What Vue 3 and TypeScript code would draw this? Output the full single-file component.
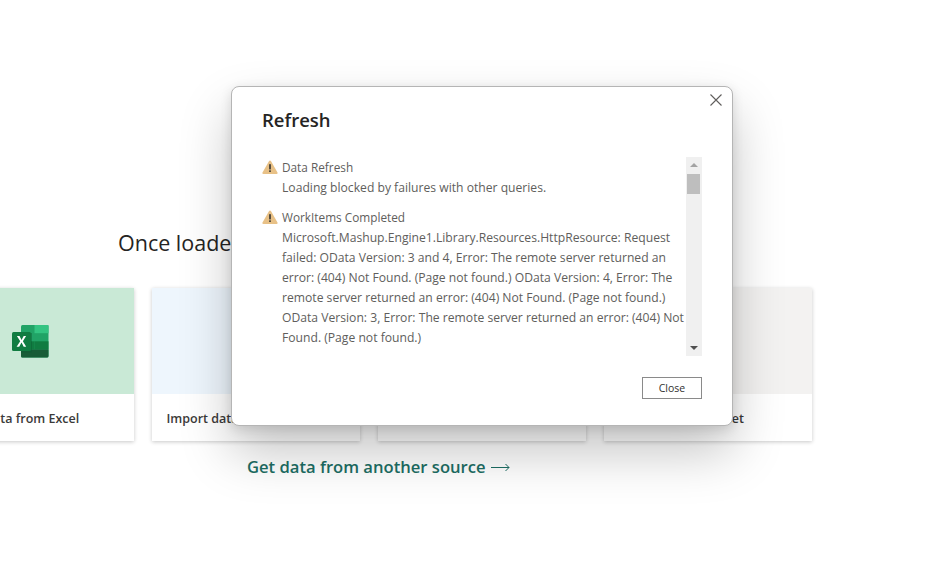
<script setup lang="ts">
interface Card { label: string; tone: string; excel?: boolean }
const cards: Card[] = [
  { label: 'Import data from Excel', tone: 'green', excel: true },
  { label: 'Import data from SQL', tone: 'blue' },
  { label: 'Paste data', tone: 'grey' },
  { label: 'Try a sample dataset', tone: 'sand' },
]
const messages = [
  { title: 'Data Refresh', lines: ['Loading blocked by failures with other queries.'] },
  {
    title: 'WorkItems Completed',
    lines: [
      'Microsoft.Mashup.Engine1.Library.Resources.HttpResource: Request',
      'failed: OData Version: 3 and 4, Error: The remote server returned an',
      'error: (404) Not Found. (Page not found.) OData Version: 4, Error: The',
      'remote server returned an error: (404) Not Found. (Page not found.)',
      'OData Version: 3, Error: The remote server returned an error: (404) Not',
      'Found. (Page not found.)',
    ],
  },
]
</script>

<template>
  <main class="page">
    <h2 class="heading">Once loaded</h2>
    <div class="cards">
      <article v-for="card in cards" :key="card.label" class="card">
        <div class="art" :class="card.tone">
          <svg v-if="card.excel" class="excel" viewBox="0 0 37 33" width="37" height="33" aria-hidden="true">
            <rect x="9" y="0" width="27.500" height="32.500" rx="1.500" fill="#21a366" />
            <rect x="22.500" y="0" width="14" height="8.200" fill="#33c481" />
            <rect x="9" y="16.300" width="13.500" height="8.100" fill="#107c41" />
            <rect x="22.500" y="16.300" width="14" height="8.100" fill="#107c41" />
            <path d="M9 24.400h27.500v6.600a1.500 1.500 0 0 1-1.500 1.500H10.500A1.500 1.500 0 0 1 9 31z" fill="#185c37" />
            <rect x="9" y="8" width="11" height="19.500" fill="#0b5a32" opacity=".45" />
            <rect x="0" y="7" width="19" height="19" rx="1.500" fill="#107c41" />
            <path d="M4.600 21.800 8.200 16.300 4.900 10.900h2.600l1.700 3.400c.1.300.2.600.3.800.1-.3.2-.5.4-.8l1.800-3.400h2.400l-3.200 5.400 3.300 5.500h-2.500l-1.900-3.700c-.1-.2-.2-.4-.3-.6l-.3.600-2 3.700z" fill="#fff" />
          </svg>
        </div>
        <div class="label">{{ card.label }}</div>
      </article>
    </div>
    <a class="more">Get data from another source
      <svg class="arrow" viewBox="0 0 19 9" width="19" height="9" aria-hidden="true">
        <path d="M0 4.500h18M14.500 1l3.500 3.500L14.500 8" fill="none" stroke="#1c6e64" stroke-width="1" />
      </svg>
    </a>
  </main>

  <section class="dialog" role="dialog" aria-label="Refresh">
    <svg class="close-x" viewBox="0 0 12 12" width="12" height="12" aria-hidden="true">
      <path d="M.5.5l11 11M11.500.5l-11 11" stroke="#605e5c" stroke-width="1.100" fill="none" />
    </svg>
    <h1 class="title">Refresh</h1>
    <div class="scroller">
      <div class="log">
        <div v-for="m in messages" :key="m.title" class="msg">
          <svg class="warn" viewBox="0 0 16 14" width="16" height="14" aria-hidden="true">
            <path d="M8 .6c.4 0 .7.2.9.5l6.600 11.400c.4.700 0 1.400-.8 1.400H1.300c-.8 0-1.200-.7-.8-1.400L7.100 1.100c.2-.3.500-.5.900-.5z" fill="#e8c187" />
            <rect x="7.200" y="4.200" width="1.600" height="5.200" fill="#323130" />
            <rect x="7.200" y="10.300" width="1.600" height="1.700" fill="#323130" />
          </svg>
          <div class="msg-text">
            <div class="msg-title">{{ m.title }}</div>
            <div v-for="line in m.lines" :key="line">{{ line }}</div>
          </div>
        </div>
      </div>
      <div class="bar">
        <span class="tri up"></span>
        <span class="thumb"></span>
        <span class="tri down"></span>
      </div>
    </div>
    <div class="actions">
      <button class="close" type="button">Close</button>
    </div>
  </section>
</template>

<style>
html, body { margin: 0; background: #fff; overflow: hidden; }
</style>

<style scoped>
.page {
  width: 928px;
  height: 573px;
  overflow: hidden;
  padding-top: 227px;
  box-sizing: border-box;
  font-family: "Open Sans", "Noto Sans", sans-serif;
}
.heading {
  margin: 0 0 30px 118px;
  font-size: 21.500px;
  line-height: 31px;
  font-weight: 400;
  color: #252423;
  white-space: nowrap;
}
.cards {
  display: flex;
  gap: 18px;
  margin-left: -74px;
}
.card {
  flex: 0 0 208px;
  min-width: 0;
  height: 153px;
  background: #fff;
  box-shadow: 0 1px 4px rgba(0, 0, 0, .22);
}
.art {
  height: 106px;
  display: flex;
  align-items: center;
  justify-content: center;
}
.green { background: #c9e9d6; }
.blue { background: #eef6fd; }
.grey { background: #f3f2f1; }
.sand { background: #f3f2f1; }
.excel { margin-left: 1px; margin-top: 1px; }
.label {
  padding: 15px 14.500px 0;
  font-size: 12.500px;
  line-height: 20px;
  font-weight: 600;
  color: #3b3a39;
  white-space: nowrap;
}
.more {
  display: flex;
  align-items: center;
  gap: 5px;
  margin: 14px 0 0 247px;
  font-size: 16.600px;
  line-height: 24px;
  font-weight: 600;
  color: #1c6e64;
  white-space: nowrap;
}
.arrow { flex: none; margin-top: 1px; }
.dialog {
  position: absolute;
  left: 231px;
  top: 86px;
  width: 500px;
  height: 338px;
  box-sizing: content-box;
  background: #fff;
  border: 1px solid #b5b5b5;
  border-radius: 8px;
  box-shadow: 0 26px 52px rgba(0, 0, 0, .23), 0 3px 12px rgba(0, 0, 0, .12);
  font-family: "Open Sans", "Noto Sans", sans-serif;
}
.close-x { position: absolute; right: 10px; top: 7px; }
.title {
  margin: 0;
  padding: 19px 0 0 30px;
  font-size: 18.500px;
  line-height: 28px;
  font-weight: 600;
  color: #252423;
}
.scroller {
  display: flex;
  margin: 23px 30px 0;
  height: 199px;
}
.log {
  flex: 1;
  min-width: 0;
  overflow: hidden;
  color: #605e5c;
  font-size: 12.150px;
  line-height: 20px;
  white-space: nowrap;
}
.msg-title { font-size: 11.800px; margin-bottom: 1px; }
.msg { display: flex; gap: 4px; margin-bottom: 9px; }
.warn { flex: none; margin-top: 3px; }
.bar {
  flex: 0 0 16px;
  background: #f0f0f0;
  position: relative;
}
.thumb {
  position: absolute;
  left: 1px;
  top: 17px;
  width: 13px;
  height: 20px;
  background: #bebebe;
}
.tri { position: absolute; left: 4px; width: 0; height: 0; border: 4px solid transparent; }
.up { top: 2px; border-bottom: 4px solid #a3a3a3; }
.down { bottom: 2px; border-top: 4px solid #505050; }
.actions {
  display: flex;
  justify-content: flex-end;
  margin: 21px 30px 0;
}
.close {
  width: 60px;
  height: 22px;
  padding: 0;
  background: #fff;
  border: 1px solid #8a8a8a;
  font: 400 10.500px "Open Sans", sans-serif;
  color: #323130;
}
</style>
